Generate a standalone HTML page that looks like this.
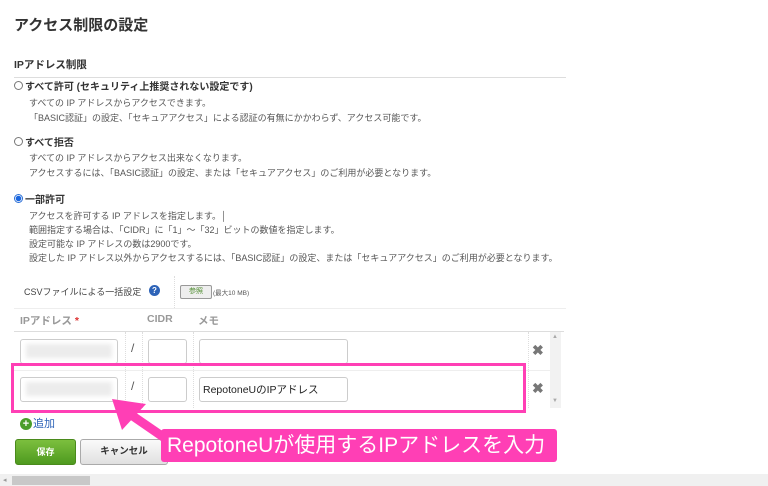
<!DOCTYPE html>
<html><head><meta charset="utf-8"><style>
body{margin:0;width:768px;height:486px;overflow:hidden;background:#fff;font-family:"Liberation Sans","Noto Sans CJK JP",sans-serif;color:#333;position:relative}
.a{position:absolute;white-space:nowrap}
.t{font-size:9px;color:#555}
.rad{width:9px;height:9px;border:1px solid #777;border-radius:50%;box-sizing:border-box;background:#fff}
.inp{position:absolute;border:1px solid #ccc;border-radius:3px;background:#fff;box-sizing:border-box}
.blur{position:absolute;background:#ececec;filter:blur(2px)}
.x{position:absolute;font-size:14px;color:#777;font-weight:bold}
.dv{position:absolute;border-left:1px dotted #ddd}
</style></head><body>
<div class="a" style="left:14px;top:14px;font-size:15px;font-weight:bold;color:#333">アクセス制限の設定</div>
<div class="a" style="left:14px;top:57px;font-size:10.5px;font-weight:bold">IPアドレス制限</div>
<div class="a" style="left:14px;top:77px;width:552px;height:1px;background:#ddd"></div>

<div class="a rad" style="left:14px;top:81px"></div>
<div class="a" style="left:25px;top:78px;font-size:10px;font-weight:bold">すべて許可 (セキュリティ上推奨されない設定です)</div>
<div class="a t" style="left:29px;top:96px">すべての IP アドレスからアクセスできます。</div>
<div class="a t" style="left:29px;top:111px">「BASIC認証」の設定、「セキュアアクセス」による認証の有無にかかわらず、アクセス可能です。</div>

<div class="a rad" style="left:14px;top:137px"></div>
<div class="a" style="left:25px;top:134px;font-size:10px;font-weight:bold">すべて拒否</div>
<div class="a t" style="left:29px;top:151px">すべての IP アドレスからアクセス出来なくなります。</div>
<div class="a t" style="left:29px;top:166px">アクセスするには、「BASIC認証」の設定、または「セキュアアクセス」のご利用が必要となります。</div>

<div class="a rad" style="left:14px;top:194px;border-color:#2a6fd6;background:radial-gradient(circle,#1a66e0 0 2.5px,#fff 3px)"></div>
<div class="a" style="left:25px;top:191px;font-size:10px;font-weight:bold">一部許可</div>
<div class="a t" style="left:29px;top:209px">アクセスを許可する IP アドレスを指定します。│</div>
<div class="a t" style="left:29px;top:223px">範囲指定する場合は、「CIDR」に「1」～「32」ビットの数値を指定します。</div>
<div class="a t" style="left:29px;top:237px">設定可能な IP アドレスの数は2900です。</div>
<div class="a t" style="left:29px;top:251px">設定した IP アドレス以外からアクセスするには、「BASIC認証」の設定、または「セキュアアクセス」のご利用が必要となります。</div>

<div class="a" style="left:24px;top:285px;font-size:9px;color:#444">CSVファイルによる一括設定</div>
<div class="a" style="left:149px;top:285px;width:11px;height:11px;border-radius:50%;background:#2d63b8;color:#fff;font-size:8px;font-weight:bold;text-align:center;line-height:11px">?</div>
<div class="dv" style="left:174px;top:276px;height:32px"></div>
<div class="a" style="left:180px;top:285px;width:30px;height:12px;border:1px solid #999;background:#eee;border-radius:2px;font-size:7px;color:#4a8a2a;text-align:center;line-height:12px">参照</div>
<div class="a" style="left:213px;top:287px;font-size:6.5px;color:#555">(最大10 MB)</div>
<div class="a" style="left:14px;top:308px;width:552px;height:1px;background:#eee"></div>

<div class="a" style="left:20px;top:313px;font-size:10.5px;font-weight:bold;color:#999">IPアドレス <span style="color:#d33">*</span></div>
<div class="a" style="left:147px;top:313px;font-size:10.5px;font-weight:bold;color:#999">CIDR</div>
<div class="a" style="left:198px;top:313px;font-size:10.5px;font-weight:bold;color:#999">メモ</div>
<div class="a" style="left:14px;top:331px;width:550px;height:1px;background:#ddd"></div>
<div class="a" style="left:14px;top:370px;width:536px;height:1px;background:#eee"></div>
<div class="a" style="left:550px;top:332px;width:11px;height:76px;background:#f2f2f2"></div>
<div class="a" style="left:552px;top:334px;font-size:6px;color:#aaa">▲</div>
<div class="a" style="left:552px;top:398px;font-size:6px;color:#aaa">▼</div>
<div class="dv" style="left:125px;top:332px;height:76px"></div>
<div class="dv" style="left:142px;top:332px;height:76px"></div>
<div class="dv" style="left:193px;top:332px;height:76px"></div>
<div class="dv" style="left:528px;top:332px;height:76px"></div>

<div class="inp" style="left:20px;top:339px;width:98px;height:25px"></div>
<div class="blur" style="left:26px;top:344px;width:86px;height:14px"></div>
<div class="a" style="left:131px;top:341px;font-size:12px;color:#555">/</div>
<div class="inp" style="left:148px;top:339px;width:39px;height:25px"></div>
<div class="inp" style="left:199px;top:339px;width:149px;height:25px"></div>
<div class="x" style="left:532px;top:342px">✖</div>

<div class="inp" style="left:20px;top:377px;width:98px;height:25px"></div>
<div class="blur" style="left:26px;top:382px;width:86px;height:14px"></div>
<div class="a" style="left:131px;top:379px;font-size:12px;color:#555">/</div>
<div class="inp" style="left:148px;top:377px;width:39px;height:25px"></div>
<div class="inp" style="left:199px;top:377px;width:149px;height:25px"></div>
<div class="a" style="left:203px;top:382px;font-size:10.5px;color:#222">RepotoneUのIPアドレス</div>
<div class="x" style="left:532px;top:380px">✖</div>

<div class="a" style="left:11px;top:363px;width:515px;height:50px;border:3px solid #ff3fb5;box-sizing:border-box"></div>

<div class="a" style="left:20px;top:418px;width:12px;height:12px;border-radius:50%;background:#4a9e2a;color:#fff;font-size:11px;font-weight:bold;text-align:center;line-height:12px">+</div>
<div class="a" style="left:33px;top:415px;font-size:11px;color:#2d63b8">追加</div>

<div class="a" style="left:15px;top:439px;width:61px;height:26px;border-radius:3px;background:linear-gradient(#7cbf3e,#4e9a1f);border:1px solid #4a8a1c;box-sizing:border-box;color:#fff;font-size:9px;font-weight:bold;text-align:center;line-height:24px">保存</div>
<div class="a" style="left:80px;top:439px;width:88px;height:26px;border-radius:3px;background:linear-gradient(#fafafa,#e0e0e0);border:1px solid #aaa;box-sizing:border-box;color:#333;font-size:9.5px;font-weight:bold;text-align:center;line-height:24px">キャンセル</div>

<svg class="a" style="left:0;top:0" width="768" height="486">
<line x1="172" y1="443" x2="124" y2="410" stroke="#ff3fb5" stroke-width="9"/>
<polygon points="112,399 146,404 122,430" fill="#ff3fb5"/>
</svg>
<div class="a" style="left:161px;top:429px;width:396px;height:33px;background:#ff3fb5;border-radius:3px;color:#fff;font-size:21px;line-height:33px;padding-left:6px;box-sizing:border-box">RepotoneUが使用するIPアドレスを入力</div>

<div class="a" style="left:0;top:474px;width:768px;height:12px;background:#f0f0f0"></div>
<div class="a" style="left:3px;top:476px;font-size:7px;color:#999">◂</div>
<div class="a" style="left:12px;top:476px;width:78px;height:9px;background:#c8c8c8"></div>
</body></html>
